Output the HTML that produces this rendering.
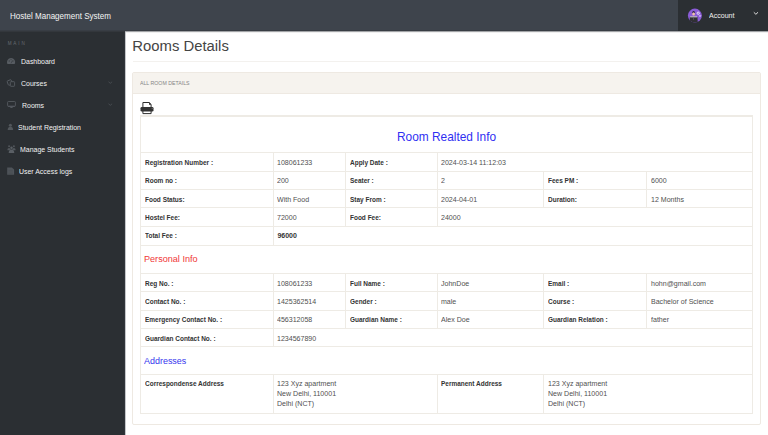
<!DOCTYPE html>
<html><head><meta charset="utf-8">
<style>
*{box-sizing:border-box;margin:0;padding:0}
html,body{width:768px;height:435px;overflow:hidden;background:#fff;font-family:"Liberation Sans",sans-serif}
.t{position:absolute;white-space:nowrap}
.r{position:absolute}
</style></head><body>
<div class="r" style="left:0px;top:0px;width:768px;height:31px;background:#3e444c;"></div>
<div class="r" style="left:678px;top:0px;width:90px;height:31px;background:#2b2f33;"></div>
<div class="r" style="left:0px;top:30px;width:768px;height:1px;background:#383d44;"></div>
<div class="r" style="left:678px;top:30px;width:90px;height:1px;background:#2a2e32;"></div>
<div class="r" style="left:125px;top:31px;width:643px;height:1px;background:#a2a4a7;"></div>
<div class="r" style="left:125px;top:32px;width:643px;height:1px;background:#f0f0f0;"></div>
<div class="t" style="left:9.85px;top:12px;font-size:8.7px;line-height:8.7px;color:#f4f4f4;transform:scaleX(0.925);transform-origin:0 0;">Hostel Management System</div>
<div class="t" style="left:709.23px;top:12px;font-size:7.6px;line-height:7.6px;color:#f2f2f2;transform:scaleX(0.928);transform-origin:0 0;">Account</div>
<svg class="r" style="left:686px;top:7px" width="18" height="18" viewBox="0 0 18 18">
<defs><clipPath id="cc"><circle cx="8.9" cy="8.6" r="7"/></clipPath></defs>
<circle cx="8.9" cy="8.6" r="7" fill="#8a5cd6"/>
<g clip-path="url(#cc)">
<path d="M3.6 16 L3.9 10.6 Q4 9.6 5 9.6 L10.4 9.6 Q11.4 9.6 11.5 10.6 L11.8 16Z" fill="#303034"/>
<rect x="4.2" y="9.4" width="6.9" height="0.9" fill="#e4e4e8"/>
<circle cx="7.6" cy="11.9" r="0.45" fill="#bbb"/>
</g>
<ellipse cx="7.6" cy="6.9" rx="1.35" ry="1.7" fill="#f0c2a8"/>
<path d="M6 6.6 Q5.9 4.2 7.6 4.1 Q9.3 4.2 9.2 6.6 Q8.8 5.4 7.6 5.3 Q6.4 5.4 6 6.6Z" fill="#26262a"/>
<circle cx="12.2" cy="6.2" r="1.15" fill="none" stroke="#f4f2fa" stroke-width="0.85"/>
<circle cx="14" cy="8.9" r="0.7" fill="none" stroke="#ece6f8" stroke-width="0.6"/>
</svg>
<svg class="r" style="left:752px;top:10px" width="8" height="6" viewBox="0 0 8 6"><path d="M1.8 2.3 L3.9 4.3 L6 2.3" fill="none" stroke="#e0e0e0" stroke-width="1"/></svg>
<div class="r" style="left:0px;top:31px;width:125px;height:404px;background:#2b2f33;"></div>
<div class="r" style="left:0px;top:31px;width:125px;height:1px;background:#33373c;"></div>
<div class="r" style="left:125px;top:32px;width:1px;height:403px;background:#c4c6c9;"></div>
<div class="r" style="left:123.5px;top:32px;width:1.5px;height:403px;background:#31353a;"></div>
<div class="t" style="left:7.63px;top:42px;font-size:4.6px;line-height:4.6px;color:#666b71;letter-spacing:1.9px;">MAIN</div>
<div class="t" style="left:21.45px;top:58px;font-size:7.4px;line-height:7.4px;color:#f2f2f2;transform:scaleX(0.94);transform-origin:0 0;">Dashboard</div>
<div class="t" style="left:21.45px;top:80px;font-size:7.4px;line-height:7.4px;color:#f2f2f2;transform:scaleX(0.94);transform-origin:0 0;">Courses</div>
<div class="t" style="left:22.15px;top:102px;font-size:7.4px;line-height:7.4px;color:#f2f2f2;transform:scaleX(0.94);transform-origin:0 0;">Rooms</div>
<div class="t" style="left:17.95px;top:124px;font-size:7.4px;line-height:7.4px;color:#f2f2f2;transform:scaleX(0.94);transform-origin:0 0;">Student Registration</div>
<div class="t" style="left:20.05px;top:146px;font-size:7.4px;line-height:7.4px;color:#f2f2f2;transform:scaleX(0.94);transform-origin:0 0;">Manage Students</div>
<div class="t" style="left:18.75px;top:168px;font-size:7.4px;line-height:7.4px;color:#f2f2f2;transform:scaleX(0.94);transform-origin:0 0;">User Access logs</div>
<svg class="r" style="left:0;top:31px" width="125" height="160" viewBox="0 31 125 160">
<path d="M7.4 63.9 A4.1 4.1 0 1 1 14.7 63.9 Z" fill="#575c62"/>
<circle cx="9.2" cy="61" r="0.7" fill="#3a3e43"/><circle cx="12.9" cy="61" r="0.7" fill="#3a3e43"/><circle cx="11.05" cy="59.6" r="0.55" fill="#3a3e43"/>
<path d="M11.05 63.4 L12.2 60.9" stroke="#3a3e43" stroke-width="0.7"/>
<rect x="7.6" y="80.2" width="4.4" height="4.6" rx="0.8" fill="none" stroke="#585d63" stroke-width="0.85" transform="rotate(-22 9.8 82.5)"/>
<rect x="10.3" y="81.7" width="4.3" height="4.6" rx="0.6" fill="#2b2f33" stroke="#585d63" stroke-width="0.85"/>
<rect x="7.6" y="101.5" width="7.8" height="4.9" rx="0.9" fill="none" stroke="#575c62" stroke-width="0.85"/>
<path d="M8 106.2 H15" stroke="#5a5f65" stroke-width="0.7"/>
<path d="M10.3 107.5 L12.6 107.5" stroke="#575c62" stroke-width="0.9"/>
<g fill="#52575c">
<circle cx="10.4" cy="125.2" r="1.55"/>
<path d="M7.7 130 Q7.8 126.8 10.4 126.8 Q13 126.8 13.1 130Z"/>
<circle cx="9.1" cy="146.3" r="0.95"/><circle cx="13.9" cy="146.3" r="0.95"/>
<path d="M7.3 150.2 Q7.4 147.9 9.1 147.9 Q10.5 147.9 10.6 149.4 L10.6 150.2Z"/>
<path d="M12.4 150.2 L12.4 149.4 Q12.5 147.9 13.9 147.9 Q15.6 147.9 15.7 150.2Z"/>
<circle cx="11.5" cy="147.7" r="1.25" fill="#5a5f65"/>
<path d="M8.7 152.9 Q8.8 149.4 11.5 149.4 Q14.2 149.4 14.3 152.9 Z" fill="#5a5f65"/>
<path d="M7.2 167.4 L11.9 167.4 L14.1 169.6 L14.1 174.8 L7.2 174.8Z" fill="#4f545a"/>
</g>
<path d="M8.4 170.4 H12.9 M8.4 172 H12.9 M8.4 173.5 H12.9" stroke="#464a4f" stroke-width="0.45"/>
<path d="M108.5 81.8 l1.8 1.5 l1.8 -1.5" fill="none" stroke="#575c61" stroke-width="0.6"/>
<path d="M108.5 103.8 l1.8 1.5 l1.8 -1.5" fill="none" stroke="#575c61" stroke-width="0.6"/>
</svg>
<div class="t" style="left:132.31px;top:39px;font-size:14.85px;line-height:14.85px;color:#444;">Rooms Details</div>
<div class="r" style="left:132.7px;top:61px;width:627.5px;height:1px;background:#f3f1ee;"></div>
<div class="r" style="left:132px;top:72px;width:629px;height:353px;border:1px solid #eee9e2;border-radius:2px;background:#fff"></div>
<div class="r" style="left:133.1px;top:73.2px;width:626.6px;height:20px;background:#f6f3ee;"></div>
<div class="r" style="left:133.1px;top:92.8px;width:626.6px;height:1px;background:#eee9e2;"></div>
<div class="t" style="left:139.96px;top:81px;font-size:5.45px;line-height:5.45px;color:#858585;transform:scaleX(0.958);transform-origin:0 0;">ALL ROOM DETAILS</div>
<svg class="r" style="left:138px;top:100px" width="18" height="16" viewBox="138 100 18 16">
<path d="M142.9 107.2 V102.5 H149.2 L151.1 104.4 V107.2" fill="none" stroke="#2e2e2e" stroke-width="1"/>
<path d="M149 102.2 V104.7 H151.4Z" fill="#2e2e2e"/>
<rect x="140.5" y="106.9" width="13" height="4.6" rx="1.3" fill="#333"/>
<circle cx="152.2" cy="108.4" r="0.5" fill="#888"/>
<path d="M142.9 111 V113.6 H151.1 V111" fill="none" stroke="#2e2e2e" stroke-width="1"/>
</svg>
<div class="r" style="left:140.4px;top:115.3px;width:613.0px;height:1.7px;background:#eeebe5;"></div>
<div class="r" style="left:140.4px;top:152.4px;width:613.0px;height:1px;background:#eeebe5;"></div>
<div class="r" style="left:140.4px;top:170.7px;width:613.0px;height:1px;background:#eeebe5;"></div>
<div class="r" style="left:140.4px;top:189.0px;width:613.0px;height:1px;background:#eeebe5;"></div>
<div class="r" style="left:140.4px;top:207.4px;width:613.0px;height:1px;background:#eeebe5;"></div>
<div class="r" style="left:140.4px;top:225.8px;width:613.0px;height:1px;background:#eeebe5;"></div>
<div class="r" style="left:140.4px;top:244.5px;width:613.0px;height:1px;background:#eeebe5;"></div>
<div class="r" style="left:140.4px;top:272.8px;width:613.0px;height:1px;background:#eeebe5;"></div>
<div class="r" style="left:140.4px;top:291.2px;width:613.0px;height:1px;background:#eeebe5;"></div>
<div class="r" style="left:140.4px;top:309.6px;width:613.0px;height:1px;background:#eeebe5;"></div>
<div class="r" style="left:140.4px;top:328.0px;width:613.0px;height:1px;background:#eeebe5;"></div>
<div class="r" style="left:140.4px;top:346.4px;width:613.0px;height:1px;background:#eeebe5;"></div>
<div class="r" style="left:140.4px;top:373.7px;width:613.0px;height:1px;background:#eeebe5;"></div>
<div class="r" style="left:140.4px;top:412.5px;width:613.0px;height:1px;background:#eeebe5;"></div>
<div class="r" style="left:139.9px;top:116px;width:1px;height:297.0px;background:#eeebe5;"></div>
<div class="r" style="left:751.9px;top:116px;width:1px;height:297.0px;background:#eeebe5;"></div>
<div class="r" style="left:272.8px;top:152.9px;width:1px;height:18.299999999999983px;background:#eeebe5;"></div>
<div class="r" style="left:345.0px;top:152.9px;width:1px;height:18.299999999999983px;background:#eeebe5;"></div>
<div class="r" style="left:436.8px;top:152.9px;width:1px;height:18.299999999999983px;background:#eeebe5;"></div>
<div class="r" style="left:272.8px;top:171.2px;width:1px;height:18.30000000000001px;background:#eeebe5;"></div>
<div class="r" style="left:345.0px;top:171.2px;width:1px;height:18.30000000000001px;background:#eeebe5;"></div>
<div class="r" style="left:436.8px;top:171.2px;width:1px;height:18.30000000000001px;background:#eeebe5;"></div>
<div class="r" style="left:543.1px;top:171.2px;width:1px;height:18.30000000000001px;background:#eeebe5;"></div>
<div class="r" style="left:646.1px;top:171.2px;width:1px;height:18.30000000000001px;background:#eeebe5;"></div>
<div class="r" style="left:272.8px;top:189.5px;width:1px;height:18.400000000000006px;background:#eeebe5;"></div>
<div class="r" style="left:345.0px;top:189.5px;width:1px;height:18.400000000000006px;background:#eeebe5;"></div>
<div class="r" style="left:436.8px;top:189.5px;width:1px;height:18.400000000000006px;background:#eeebe5;"></div>
<div class="r" style="left:543.1px;top:189.5px;width:1px;height:18.400000000000006px;background:#eeebe5;"></div>
<div class="r" style="left:646.1px;top:189.5px;width:1px;height:18.400000000000006px;background:#eeebe5;"></div>
<div class="r" style="left:272.8px;top:207.9px;width:1px;height:18.400000000000006px;background:#eeebe5;"></div>
<div class="r" style="left:345.0px;top:207.9px;width:1px;height:18.400000000000006px;background:#eeebe5;"></div>
<div class="r" style="left:436.8px;top:207.9px;width:1px;height:18.400000000000006px;background:#eeebe5;"></div>
<div class="r" style="left:272.8px;top:226.3px;width:1px;height:18.69999999999999px;background:#eeebe5;"></div>
<div class="r" style="left:272.8px;top:273.3px;width:1px;height:18.399999999999977px;background:#eeebe5;"></div>
<div class="r" style="left:345.0px;top:273.3px;width:1px;height:18.399999999999977px;background:#eeebe5;"></div>
<div class="r" style="left:436.8px;top:273.3px;width:1px;height:18.399999999999977px;background:#eeebe5;"></div>
<div class="r" style="left:543.1px;top:273.3px;width:1px;height:18.399999999999977px;background:#eeebe5;"></div>
<div class="r" style="left:646.1px;top:273.3px;width:1px;height:18.399999999999977px;background:#eeebe5;"></div>
<div class="r" style="left:272.8px;top:291.7px;width:1px;height:18.400000000000034px;background:#eeebe5;"></div>
<div class="r" style="left:345.0px;top:291.7px;width:1px;height:18.400000000000034px;background:#eeebe5;"></div>
<div class="r" style="left:436.8px;top:291.7px;width:1px;height:18.400000000000034px;background:#eeebe5;"></div>
<div class="r" style="left:543.1px;top:291.7px;width:1px;height:18.400000000000034px;background:#eeebe5;"></div>
<div class="r" style="left:646.1px;top:291.7px;width:1px;height:18.400000000000034px;background:#eeebe5;"></div>
<div class="r" style="left:272.8px;top:310.1px;width:1px;height:18.399999999999977px;background:#eeebe5;"></div>
<div class="r" style="left:345.0px;top:310.1px;width:1px;height:18.399999999999977px;background:#eeebe5;"></div>
<div class="r" style="left:436.8px;top:310.1px;width:1px;height:18.399999999999977px;background:#eeebe5;"></div>
<div class="r" style="left:543.1px;top:310.1px;width:1px;height:18.399999999999977px;background:#eeebe5;"></div>
<div class="r" style="left:646.1px;top:310.1px;width:1px;height:18.399999999999977px;background:#eeebe5;"></div>
<div class="r" style="left:272.8px;top:328.5px;width:1px;height:18.399999999999977px;background:#eeebe5;"></div>
<div class="r" style="left:272.8px;top:374.2px;width:1px;height:38.80000000000001px;background:#eeebe5;"></div>
<div class="r" style="left:436.8px;top:374.2px;width:1px;height:38.80000000000001px;background:#eeebe5;"></div>
<div class="r" style="left:543.1px;top:374.2px;width:1px;height:38.80000000000001px;background:#eeebe5;"></div>
<div class="t" style="left:396.81px;top:131px;font-size:12.4px;line-height:12.4px;color:#2f2ff2;transform:scaleX(0.959);transform-origin:0 0;">Room Realted Info</div>
<div class="t" style="left:144.23px;top:254px;font-size:9.6px;line-height:9.6px;color:#f03838;transform:scaleX(0.948);transform-origin:0 0;">Personal Info</div>
<div class="t" style="left:144.25px;top:356px;font-size:9.4px;line-height:9.4px;color:#3434ee;transform:scaleX(0.955);transform-origin:0 0;">Addresses</div>
<div class="t" style="left:144.53px;top:159px;font-size:7.3px;line-height:7.3px;color:#333;font-weight:bold;transform:scaleX(0.888);transform-origin:0 0;">Registration Number :</div>
<div class="t" style="left:277.30px;top:159px;font-size:7.45px;line-height:7.45px;color:#505050;transform:scaleX(0.948);transform-origin:0 0;">108061233</div>
<div class="t" style="left:349.63px;top:159px;font-size:7.3px;line-height:7.3px;color:#333;font-weight:bold;transform:scaleX(0.888);transform-origin:0 0;">Apply Date :</div>
<div class="t" style="left:441.30px;top:159px;font-size:7.45px;line-height:7.45px;color:#505050;transform:scaleX(0.948);transform-origin:0 0;">2024-03-14 11:12:03</div>
<div class="t" style="left:144.53px;top:177px;font-size:7.3px;line-height:7.3px;color:#333;font-weight:bold;transform:scaleX(0.888);transform-origin:0 0;">Room no :</div>
<div class="t" style="left:277.30px;top:177px;font-size:7.45px;line-height:7.45px;color:#505050;transform:scaleX(0.948);transform-origin:0 0;">200</div>
<div class="t" style="left:349.63px;top:177px;font-size:7.3px;line-height:7.3px;color:#333;font-weight:bold;transform:scaleX(0.888);transform-origin:0 0;">Seater :</div>
<div class="t" style="left:441.30px;top:177px;font-size:7.45px;line-height:7.45px;color:#505050;transform:scaleX(0.948);transform-origin:0 0;">2</div>
<div class="t" style="left:547.73px;top:177px;font-size:7.3px;line-height:7.3px;color:#333;font-weight:bold;transform:scaleX(0.888);transform-origin:0 0;">Fees PM :</div>
<div class="t" style="left:650.60px;top:177px;font-size:7.45px;line-height:7.45px;color:#505050;transform:scaleX(0.948);transform-origin:0 0;">6000</div>
<div class="t" style="left:144.53px;top:196px;font-size:7.3px;line-height:7.3px;color:#333;font-weight:bold;transform:scaleX(0.888);transform-origin:0 0;">Food Status:</div>
<div class="t" style="left:277.30px;top:196px;font-size:7.45px;line-height:7.45px;color:#505050;transform:scaleX(0.948);transform-origin:0 0;">With Food</div>
<div class="t" style="left:349.63px;top:196px;font-size:7.3px;line-height:7.3px;color:#333;font-weight:bold;transform:scaleX(0.888);transform-origin:0 0;">Stay From :</div>
<div class="t" style="left:441.30px;top:196px;font-size:7.45px;line-height:7.45px;color:#505050;transform:scaleX(0.948);transform-origin:0 0;">2024-04-01</div>
<div class="t" style="left:547.73px;top:196px;font-size:7.3px;line-height:7.3px;color:#333;font-weight:bold;transform:scaleX(0.888);transform-origin:0 0;">Duration:</div>
<div class="t" style="left:650.60px;top:196px;font-size:7.45px;line-height:7.45px;color:#505050;transform:scaleX(0.948);transform-origin:0 0;">12 Months</div>
<div class="t" style="left:144.53px;top:214px;font-size:7.3px;line-height:7.3px;color:#333;font-weight:bold;transform:scaleX(0.888);transform-origin:0 0;">Hostel Fee:</div>
<div class="t" style="left:277.30px;top:214px;font-size:7.45px;line-height:7.45px;color:#505050;transform:scaleX(0.948);transform-origin:0 0;">72000</div>
<div class="t" style="left:349.63px;top:214px;font-size:7.3px;line-height:7.3px;color:#333;font-weight:bold;transform:scaleX(0.888);transform-origin:0 0;">Food Fee:</div>
<div class="t" style="left:441.30px;top:214px;font-size:7.45px;line-height:7.45px;color:#505050;transform:scaleX(0.948);transform-origin:0 0;">24000</div>
<div class="t" style="left:144.53px;top:232px;font-size:7.3px;line-height:7.3px;color:#333;font-weight:bold;transform:scaleX(0.888);transform-origin:0 0;">Total Fee :</div>
<div class="t" style="left:277.41px;top:232px;font-size:7px;line-height:7px;color:#333;font-weight:bold;">96000</div>
<div class="t" style="left:144.53px;top:280px;font-size:7.3px;line-height:7.3px;color:#333;font-weight:bold;transform:scaleX(0.888);transform-origin:0 0;">Reg No. :</div>
<div class="t" style="left:277.30px;top:280px;font-size:7.45px;line-height:7.45px;color:#505050;transform:scaleX(0.948);transform-origin:0 0;">108061233</div>
<div class="t" style="left:349.63px;top:280px;font-size:7.3px;line-height:7.3px;color:#333;font-weight:bold;transform:scaleX(0.888);transform-origin:0 0;">Full Name :</div>
<div class="t" style="left:441.30px;top:280px;font-size:7.45px;line-height:7.45px;color:#505050;transform:scaleX(0.948);transform-origin:0 0;">JohnDoe</div>
<div class="t" style="left:547.73px;top:280px;font-size:7.3px;line-height:7.3px;color:#333;font-weight:bold;transform:scaleX(0.888);transform-origin:0 0;">Email :</div>
<div class="t" style="left:650.60px;top:280px;font-size:7.45px;line-height:7.45px;color:#505050;transform:scaleX(0.948);transform-origin:0 0;">hohn@gmail.com</div>
<div class="t" style="left:144.53px;top:298px;font-size:7.3px;line-height:7.3px;color:#333;font-weight:bold;transform:scaleX(0.888);transform-origin:0 0;">Contact No. :</div>
<div class="t" style="left:277.30px;top:298px;font-size:7.45px;line-height:7.45px;color:#505050;transform:scaleX(0.948);transform-origin:0 0;">1425362514</div>
<div class="t" style="left:349.63px;top:298px;font-size:7.3px;line-height:7.3px;color:#333;font-weight:bold;transform:scaleX(0.888);transform-origin:0 0;">Gender :</div>
<div class="t" style="left:441.30px;top:298px;font-size:7.45px;line-height:7.45px;color:#505050;transform:scaleX(0.948);transform-origin:0 0;">male</div>
<div class="t" style="left:547.73px;top:298px;font-size:7.3px;line-height:7.3px;color:#333;font-weight:bold;transform:scaleX(0.888);transform-origin:0 0;">Course :</div>
<div class="t" style="left:650.60px;top:298px;font-size:7.45px;line-height:7.45px;color:#505050;transform:scaleX(0.948);transform-origin:0 0;">Bachelor of Science</div>
<div class="t" style="left:144.53px;top:316px;font-size:7.3px;line-height:7.3px;color:#333;font-weight:bold;transform:scaleX(0.888);transform-origin:0 0;">Emergency Contact No. :</div>
<div class="t" style="left:277.30px;top:316px;font-size:7.45px;line-height:7.45px;color:#505050;transform:scaleX(0.948);transform-origin:0 0;">456312058</div>
<div class="t" style="left:349.63px;top:316px;font-size:7.3px;line-height:7.3px;color:#333;font-weight:bold;transform:scaleX(0.888);transform-origin:0 0;">Guardian Name :</div>
<div class="t" style="left:441.30px;top:316px;font-size:7.45px;line-height:7.45px;color:#505050;transform:scaleX(0.948);transform-origin:0 0;">Alex Doe</div>
<div class="t" style="left:547.73px;top:316px;font-size:7.3px;line-height:7.3px;color:#333;font-weight:bold;transform:scaleX(0.888);transform-origin:0 0;">Guardian Relation :</div>
<div class="t" style="left:650.60px;top:316px;font-size:7.45px;line-height:7.45px;color:#505050;transform:scaleX(0.948);transform-origin:0 0;">father</div>
<div class="t" style="left:144.53px;top:335px;font-size:7.3px;line-height:7.3px;color:#333;font-weight:bold;transform:scaleX(0.888);transform-origin:0 0;">Guardian Contact No. :</div>
<div class="t" style="left:277.30px;top:335px;font-size:7.45px;line-height:7.45px;color:#505050;transform:scaleX(0.948);transform-origin:0 0;">1234567890</div>
<div class="t" style="left:144.53px;top:380px;font-size:7.3px;line-height:7.3px;color:#333;font-weight:bold;transform:scaleX(0.888);transform-origin:0 0;">Correspondense Address</div>
<div class="t" style="left:441.43px;top:380px;font-size:7.3px;line-height:7.3px;color:#333;font-weight:bold;transform:scaleX(0.888);transform-origin:0 0;">Permanent Address</div>
<div class="t" style="left:277.30px;top:380px;font-size:7.45px;line-height:7.45px;color:#505050;transform:scaleX(0.948);transform-origin:0 0;">123 Xyz apartment</div>
<div class="t" style="left:277.30px;top:390px;font-size:7.45px;line-height:7.45px;color:#505050;transform:scaleX(0.948);transform-origin:0 0;">New Delhi, 110001</div>
<div class="t" style="left:277.30px;top:400px;font-size:7.45px;line-height:7.45px;color:#505050;transform:scaleX(0.948);transform-origin:0 0;">Delhi (NCT)</div>
<div class="t" style="left:547.60px;top:380px;font-size:7.45px;line-height:7.45px;color:#505050;transform:scaleX(0.948);transform-origin:0 0;">123 Xyz apartment</div>
<div class="t" style="left:547.60px;top:390px;font-size:7.45px;line-height:7.45px;color:#505050;transform:scaleX(0.948);transform-origin:0 0;">New Delhi, 110001</div>
<div class="t" style="left:547.60px;top:400px;font-size:7.45px;line-height:7.45px;color:#505050;transform:scaleX(0.948);transform-origin:0 0;">Delhi (NCT)</div>
</body></html>
